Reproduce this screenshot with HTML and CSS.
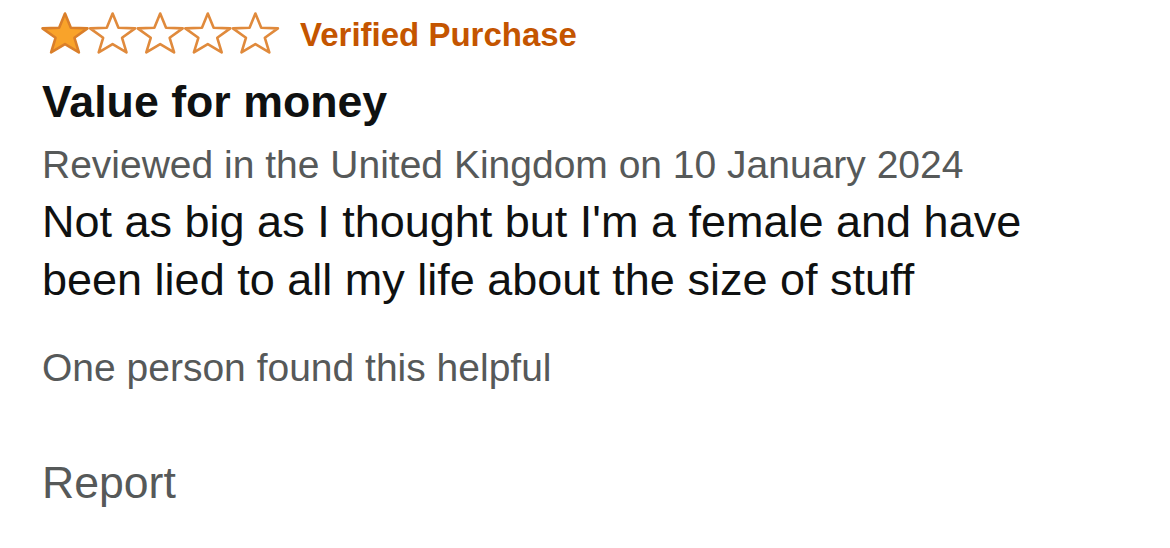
FILE: index.html
```html
<!DOCTYPE html>
<html lang="en">
<head>
<meta charset="utf-8">
<title>Review</title>
<link rel="stylesheet" href="styles.css">
</head>
<body>
<div class="review">
  <div class="review-header">
    <svg class="stars" width="240" height="42" viewBox="0 0 240 42" aria-label="1 out of 5 stars">
      <defs>
        <polygon id="star" points="24,1.5 29.84,15.69 46.49,16.36 33.45,25.79 37.9,40.39 24,32.03 10.1,40.39 14.55,25.79 1.51,16.36 18.16,15.69"/>
      </defs>
      <use href="#star" class="star-full"/>
      <use href="#star" class="star-empty" x="47.6"/>
      <use href="#star" class="star-empty" x="95.2"/>
      <use href="#star" class="star-empty" x="142.8"/>
      <use href="#star" class="star-empty" x="190.4"/>
    </svg>
    <span class="verified">Verified Purchase</span>
  </div>
  <h2 class="review-title">Value for money</h2>
  <div class="review-meta">Reviewed in the United Kingdom on 10 January 2024</div>
  <p class="review-body">Not as big as I thought but I'm a female and have been lied to all my life about the size of stuff</p>
  <div class="review-helpful">One person found this helpful</div>
  <div class="review-report">Report</div>
</div>
</body>
</html>
```

FILE: styles.css
```css
html, body {
  margin: 0;
  padding: 0;
  background: #ffffff;
}

body {
  font-family: "Liberation Sans", Arial, Helvetica, sans-serif;
  color: #0f1111;
}

.review {
  padding: 12px 0 0 41px;
}

.review-header {
  display: flex;
  align-items: flex-start;
  gap: 19px;
  height: 46px;
}

.stars {
  display: block;
  flex: none;
  overflow: visible;
}

.star-full {
  fill: #f9a32a;
  stroke: #da7f2a;
  stroke-width: 2.6;
  stroke-linejoin: round;
}

.star-empty {
  fill: #ffffff;
  stroke: #e08a3c;
  stroke-width: 2.6;
  stroke-linejoin: round;
}

.verified {
  font-size: 33px;
  line-height: 46px;
  font-weight: bold;
  color: #c45500;
}

.review-title {
  margin: 14px 0 0 1px;
  font-size: 44.7px;
  line-height: 60px;
  font-weight: bold;
  color: #0f1111;
}

.review-meta {
  margin: 8px 0 0 1px;
  font-size: 39px;
  line-height: 50px;
  color: #565959;
}

.review-body {
  margin: 3px 0 0 1px;
  max-width: 1060px;
  font-size: 45px;
  line-height: 58px;
  color: #0f1111;
}

.review-helpful {
  margin: 34px 0 0 1px;
  font-size: 39px;
  line-height: 50px;
  color: #565959;
}

.review-report {
  margin: 60px 0 0 1px;
  font-size: 44.6px;
  line-height: 60px;
  color: #565959;
}
```
